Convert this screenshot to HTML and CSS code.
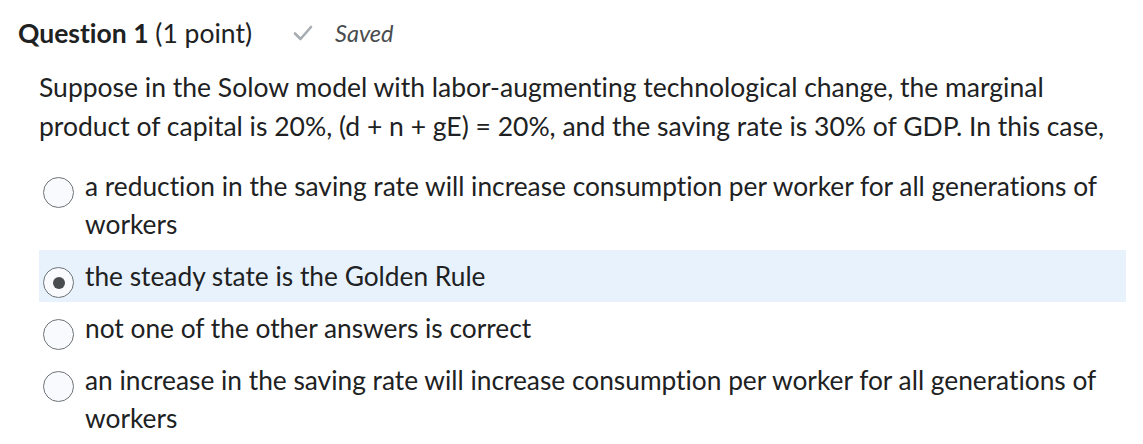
FILE: index.html
```html
<!DOCTYPE html>
<html>
<head>
<meta charset="utf-8">
<link rel="stylesheet" href="styles.css">
</head>
<body>
<div class="question">
  <div class="header">
    <h2 class="title"><span class="qnum">Question 1</span> (1 point)</h2>
    <div class="saved">
      <svg class="check" width="22" height="22" viewBox="0 0 22 22"><path d="M3 11.5 L8.5 17 L19 5" fill="none" stroke="#a8adb1" stroke-width="2.6" stroke-linecap="round" stroke-linejoin="round"/></svg>
      <span class="saved-text">Saved</span>
    </div>
  </div>
  <p class="prompt">Suppose in the Solow model with labor-augmenting technological change, the marginal product of capital is 20%, (d + n + gE) = 20%, and the saving rate is 30% of GDP. In this case,</p>
  <div class="options">
    <label class="option"><span class="radio-wrap"><span class="radio"></span></span><span class="opt-text">a reduction in the saving rate will increase consumption per worker for all generations of workers</span></label>
    <label class="option selected"><span class="radio-wrap"><span class="radio checked"></span></span><span class="opt-text">the steady state is the Golden Rule</span></label>
    <label class="option"><span class="radio-wrap"><span class="radio"></span></span><span class="opt-text">not one of the other answers is correct</span></label>
    <label class="option"><span class="radio-wrap"><span class="radio"></span></span><span class="opt-text">an increase in the saving rate will increase consumption per worker for all generations of workers</span></label>
  </div>
</div>
</body>
</html>
```
FILE: styles.css
```css
html, body {
  margin: 0;
  padding: 0;
  background: #ffffff;
}
body {
  font-family: Lato, "Noto Sans", sans-serif;
  color: #202122;
  font-variant-ligatures: none;
}
.question {
  padding: 14px 17px 0 18px;
}
.header {
  display: flex;
  align-items: center;
  height: 38px;
}
.title {
  margin: 0;
  font-size: 26.5px;
  font-weight: 400;
  line-height: 38px;
}
.qnum {
  font-weight: 700;
}
.saved {
  display: flex;
  align-items: center;
  margin-left: 40px;
  color: #494c4e;
}
.check {
  display: block;
}
.saved-text {
  margin-left: 21px;
  font-style: italic;
  font-size: 23.5px;
}
.prompt {
  margin: 16px 0 0 21px;
  font-size: 26.5px;
  line-height: 39px;
  max-width: 1080px;
}
.options {
  margin: 14px 0 0 21px;
  display: flex;
  flex-direction: column;
}
.option {
  display: flex;
  align-items: flex-start;
  padding: 7px 0 7px 4px;
  font-size: 26.3px;
  line-height: 38px;
}
.option.selected {
  background: #e8f2fc;
}
.radio-wrap {
  flex: none;
  height: 38px;
  padding-top: 10px;
  box-sizing: border-box;
}
.radio {
  box-sizing: border-box;
  width: 31px;
  height: 31px;
  border: 1.5px solid #6e7477;
  border-radius: 50%;
  background: #f9fafe;
  display: flex;
  align-items: center;
  justify-content: center;
}
.radio.checked::after {
  content: "";
  width: 12px;
  height: 12px;
  border-radius: 50%;
  background: #494c4e;
}
.opt-text {
  margin-left: 11px;
  padding-right: 20px;
}
```
